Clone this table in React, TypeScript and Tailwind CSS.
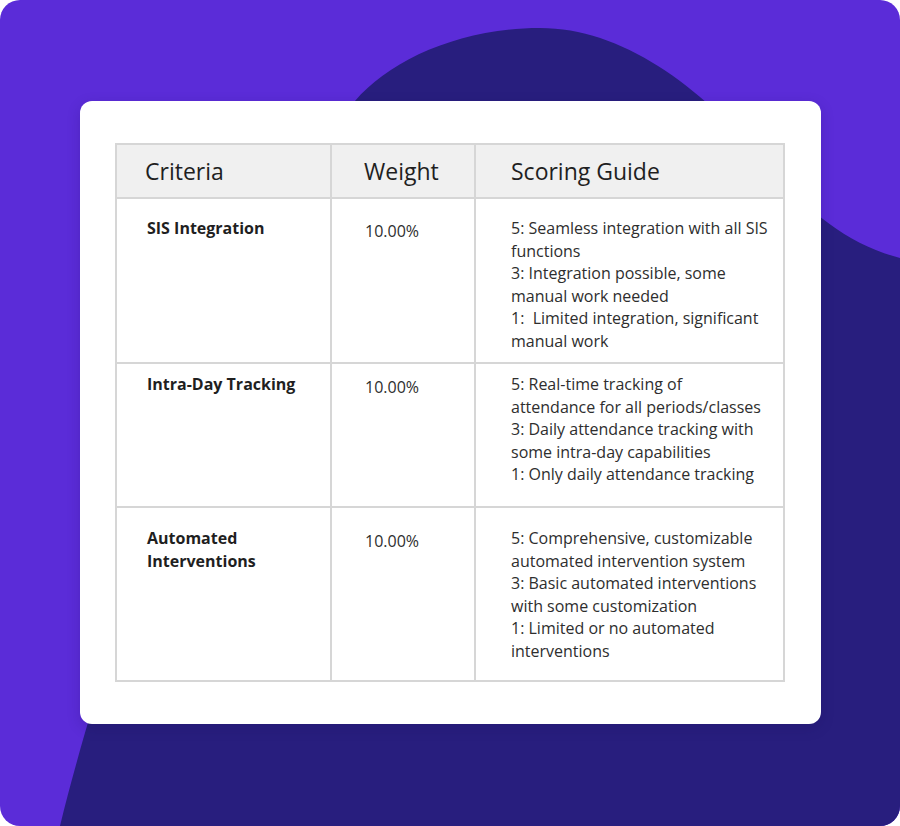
import type { ReactNode } from 'react';

type Row = {
  criteria: string[];
  weight: string;
  guide: string[];
  height: string;
  padTop: string;
};

const rows: Row[] = [
  {
    criteria: ['SIS Integration'],
    weight: '10.00%',
    guide: [
      '5: Seamless integration with all SIS',
      'functions',
      '3: Integration possible, some',
      'manual work needed',
      '1:  Limited integration, significant',
      'manual work',
    ],
    height: 'h-[165px]',
    padTop: 'pt-[18px]',
  },
  {
    criteria: ['Intra-Day Tracking'],
    weight: '10.00%',
    guide: [
      '5: Real-time tracking of',
      'attendance for all periods/classes',
      '3: Daily attendance tracking with',
      'some intra-day capabilities',
      '1: Only daily attendance tracking',
    ],
    height: 'h-[144px]',
    padTop: 'pt-[9px]',
  },
  {
    criteria: ['Automated', 'Interventions'],
    weight: '10.00%',
    guide: [
      '5: Comprehensive, customizable',
      'automated intervention system',
      '3: Basic automated interventions',
      'with some customization',
      '1: Limited or no automated',
      'interventions',
    ],
    height: 'h-[174px]',
    padTop: 'pt-[19px]',
  },
];

function Lines({ lines }: { lines: string[] }) {
  return (
    <>
      {lines.map((line) => (
        <div key={line} className="whitespace-pre">
          {line}
        </div>
      ))}
    </>
  );
}

function Cell({ className, children }: { className: string; children: ReactNode }) {
  return <div className={className}>{children}</div>;
}

export default function App() {
  return (
    <div className="bg-white w-[900px] h-[826px]">
      <div className="relative w-[900px] h-[826px] overflow-hidden rounded-[20px] bg-[#5B2CD8] pt-[101px] pl-[80px] font-['Open_Sans',sans-serif]">
        <svg className="absolute inset-0" width="900" height="826" viewBox="0 0 900 826">
          <path
            d="M 60 826 C 110 620 250 230 355 101 C 390 60 460 28 540 28 C 625 28 705 90 772 170 C 812 215 850 245 900 258 L 900 826 Z"
            fill="#281E7E"
          />
        </svg>

        <div className="relative w-[741px] h-[623px] rounded-[12px] bg-white shadow-[0_4px_14px_rgba(20,10,80,0.18)] pt-[42px] pl-[35px]">
          <div className="w-[670px] border-2 border-[#d6d6d6] text-[#2e2e2e]">
            <div className="flex h-[52px] bg-[#f0f0f0] text-[23px] text-[#1f1f1f]">
              <Cell className="w-[215px] border-r-2 border-[#d6d6d6] pl-[28px] flex items-center">Criteria</Cell>
              <Cell className="w-[144px] border-r-2 border-[#d6d6d6] pl-[32px] flex items-center">Weight</Cell>
              <Cell className="flex-1 pl-[35px] flex items-center">Scoring Guide</Cell>
            </div>
            {rows.map((row) => (
              <div key={row.weight + row.criteria[0]} className={`flex border-t-2 border-[#d6d6d6] text-[16px] leading-[22.6px] ${row.height}`}>
                <Cell className={`w-[215px] border-r-2 border-[#d6d6d6] pl-[30px] font-bold text-[#1f1f1f] ${row.padTop}`}>
                  <Lines lines={row.criteria} />
                </Cell>
                <Cell className={`w-[144px] border-r-2 border-[#d6d6d6] pl-[33px] ${row.padTop}`}>
                  <div className="pt-[3px]">{row.weight}</div>
                </Cell>
                <Cell className={`flex-1 pl-[35px] ${row.padTop}`}>
                  <Lines lines={row.guide} />
                </Cell>
              </div>
            ))}
          </div>
        </div>
      </div>
    </div>
  );
}
